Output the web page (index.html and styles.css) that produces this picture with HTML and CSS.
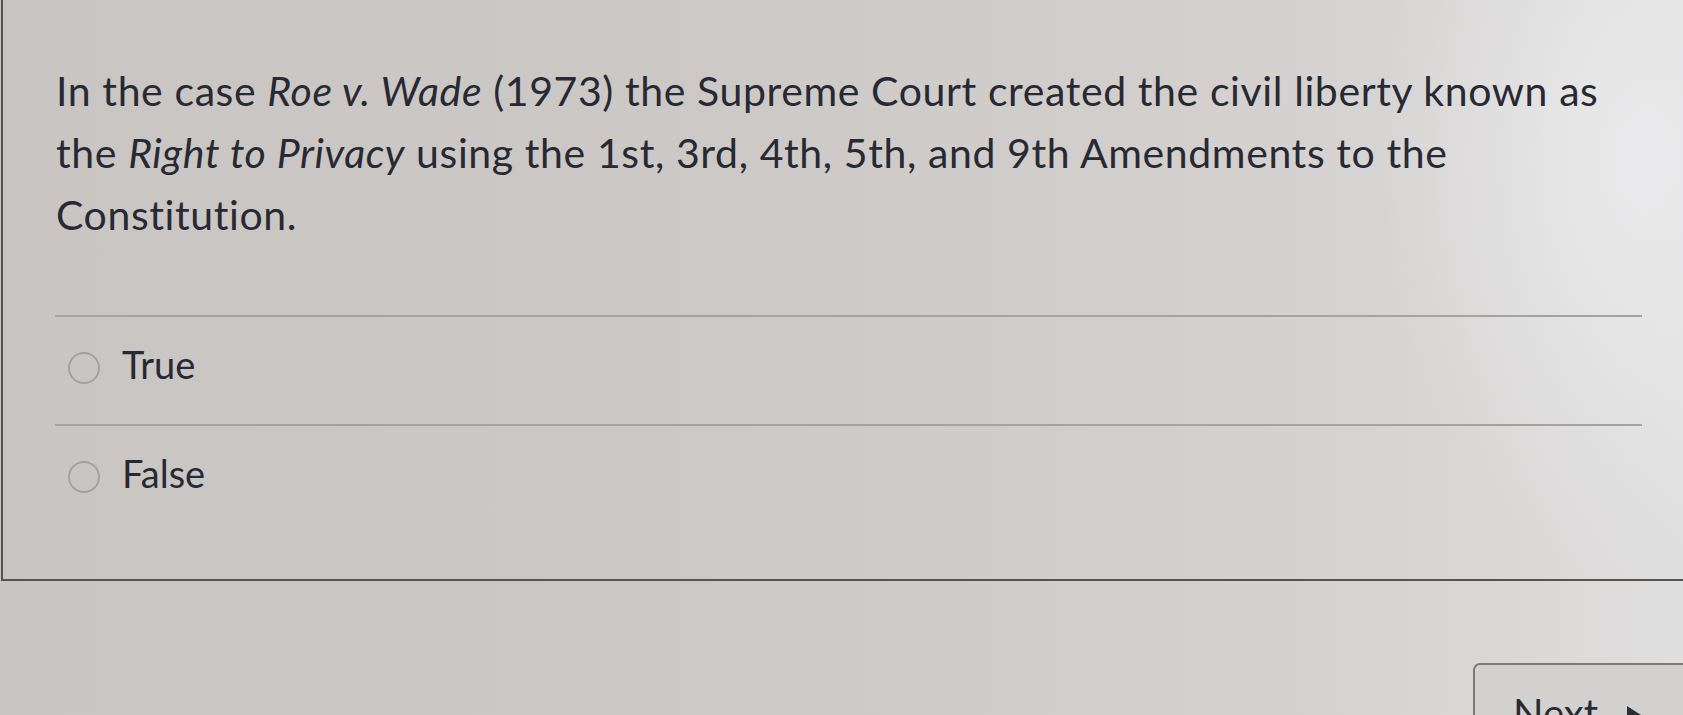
FILE: index.html
```html
<!DOCTYPE html>
<html lang="en">
<head>
<meta charset="utf-8">
<title>Quiz question</title>
<link rel="stylesheet" href="styles.css">
</head>
<body>
<div class="page">
  <div class="quiz">
    <p class="question">In the case <em>Roe v. Wade</em> (1973) the Supreme Court created the civil liberty known as the <em>Right to Privacy</em> using the 1st, 3rd, 4th, 5th, and 9th Amendments to the Constitution.</p>
    <div class="answers">
      <label class="answer"><span class="radio"></span><span class="answer-text">True</span></label>
      <label class="answer"><span class="radio"></span><span class="answer-text">False</span></label>
    </div>
  </div>
  <div class="footer">
    <button class="next">Next <svg class="arrow" width="16" height="20" viewBox="0 0 16 20"><path d="M1 1 L15 10 L1 19 Z" fill="#2b2e36"/></svg></button>
  </div>
</div>
</body>
</html>
```
FILE: styles.css
```css
html, body {
  margin: 0;
  padding: 0;
}
body {
  width: 1683px;
  height: 715px;
  overflow: hidden;
  font-family: Lato, "Open Sans", "Liberation Sans", sans-serif;
  color: #272a32;
  background:
    radial-gradient(ellipse 260px 420px at 1640px 160px, rgba(236,236,238,0.85), rgba(236,236,238,0) 100%),
    linear-gradient(90deg, #c9c5c3 0%, #ccc8c6 40%, #d2cfcd 70%, #d9d7d6 88%, #e0dfdf 100%);
}
.page {
  width: 1683px;
  height: 715px;
  display: flex;
  flex-direction: column;
  overflow: hidden;
}
.quiz {
  box-sizing: border-box;
  flex: none;
  height: 581px;
  margin-left: 1px;
  border-left: 2px solid #55524f;
  border-bottom: 2px solid #57534f;
  display: flex;
  flex-direction: column;
}
.question {
  margin: 60px 0 0 0;
  padding-left: 53px;
  width: 1580px;
  font-size: 41px;
  line-height: 62px;
  letter-spacing: 0.6px;
}
.question em {
  font-style: italic;
}
.answers {
  margin: 69px 0 0 52px;
  width: 1587px;
  display: flex;
  flex-direction: column;
}
.answer {
  display: flex;
  align-items: center;
  gap: 22px;
  border-top: 2px solid #a6a2a0;
  padding: 27px 0 40px 13px;
}
.radio {
  box-sizing: border-box;
  width: 32px;
  height: 32px;
  border-radius: 50%;
  border: 2px solid #a3a09f;
  margin-top: 8px;
  flex: none;
}
.answer-text {
  font-size: 38px;
  line-height: 38px;
}
.footer {
  flex: none;
  display: flex;
  padding: 82px 0 0 1473px;
}
.next {
  box-sizing: border-box;
  flex: none;
  width: 260px;
  height: 120px;
  border: 2px solid #7c7976;
  border-radius: 7px;
  background: #d3d1cf;
  font-family: Lato, "Open Sans", "Liberation Sans", sans-serif;
  font-size: 40px;
  color: #272a32;
  padding: 24px 0 0 38px;
  text-align: left;
  display: flex;
  align-items: flex-start;
  gap: 28px;
  line-height: 48px;
}
.arrow {
  margin-top: 16px;
}
```
